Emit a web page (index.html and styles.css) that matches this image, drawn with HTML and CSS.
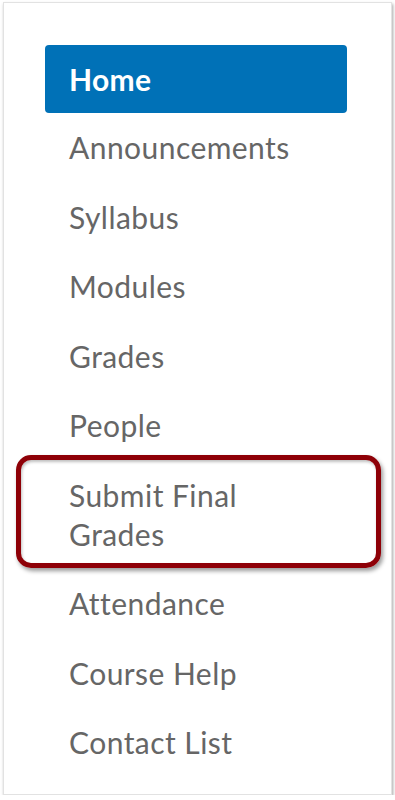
FILE: index.html
```html
<!DOCTYPE html>
<html>
<head>
<meta charset="utf-8">
<link rel="stylesheet" href="styles.css">
</head>
<body>
<div class="frame">
  <nav class="menu">
    <a class="item active">Home</a>
    <a class="item">Announcements</a>
    <a class="item">Syllabus</a>
    <a class="item">Modules</a>
    <a class="item">Grades</a>
    <a class="item">People</a>
    <a class="item highlighted">Submit Final<br>Grades<span class="callout"></span></a>
    <a class="item">Attendance</a>
    <a class="item">Course Help</a>
    <a class="item">Contact List</a>
  </nav>
</div>
</body>
</html>
```
FILE: styles.css
```css
html, body {
  margin: 0;
  padding: 0;
  background: #ffffff;
}
body {
  font-family: Lato, "Open Sans", sans-serif;
}
.frame {
  margin: 2px 0 0 3px;
  width: 387px;
  height: 791px;
  border: 1px solid #e2e2e2;
  box-shadow: 1px 2px 3px rgba(0,0,0,0.35);
  background: #fff;
  box-sizing: content-box;
}
.menu {
  display: flex;
  flex-direction: column;
  padding: 42px 44px 0 41px;
}
.item {
  display: block;
  position: relative;
  padding: 15.25px 24px;
  font-size: 30px;
  line-height: 39px;
  letter-spacing: 0.45px;
  color: #666666;
}
.item.active {
  background: #0071b7;
  color: #fff;
  font-weight: 700;
  border-radius: 4px;
  padding: 14.5px 24px;
  letter-spacing: 0.3px;
}
.callout {
  position: absolute;
  left: -29px;
  top: -6px;
  width: 365px;
  height: 113px;
  box-sizing: border-box;
  border: 5px solid #8e0007;
  border-radius: 15px;
  box-shadow: 2px 3px 4px rgba(0,0,0,0.4), inset 1px 2px 3px rgba(0,0,0,0.25);
}
```
